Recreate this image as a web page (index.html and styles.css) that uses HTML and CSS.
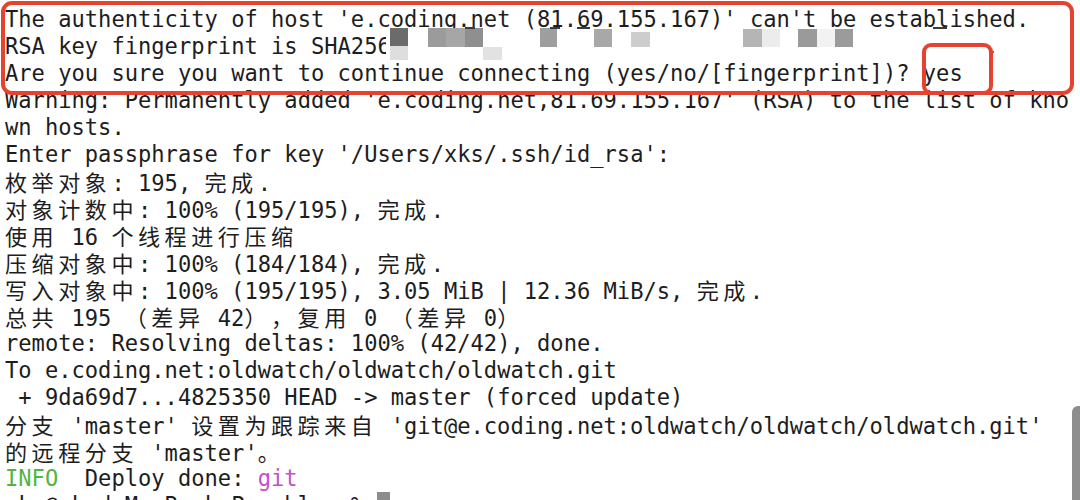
FILE: index.html
```html
<!DOCTYPE html>
<html lang="zh-CN">
<head>
<meta charset="utf-8">
<title>Terminal</title>
<link rel="stylesheet" href="styles.css">
</head>
<body>
<div class="term">
  <div class="line">The authenticity of host 'e.coding.net (81.69.155.167)' can't be established.</div>
  <div class="line">RSA key fingerprint is SHA256</div>
  <div class="line">Are you sure you want to continue connecting (yes/no/[fingerprint])? yes</div>
  <div class="line">Warning: Permanently added 'e.coding.net,81.69.155.167' (RSA) to the list of kno</div>
  <div class="line">wn hosts.</div>
  <div class="line">Enter passphrase for key '/Users/xks/.ssh/id_rsa':</div>
  <div class="line"><span class="cjk">枚举对象</span>: 195, <span class="cjk">完成</span>.</div>
  <div class="line"><span class="cjk">对象计数中</span>: 100% (195/195), <span class="cjk">完成</span>.</div>
  <div class="line"><span class="cjk">使用</span> 16 <span class="cjk">个线程进行压缩</span></div>
  <div class="line"><span class="cjk">压缩对象中</span>: 100% (184/184), <span class="cjk">完成</span>.</div>
  <div class="line"><span class="cjk">写入对象中</span>: 100% (195/195), 3.05 MiB | 12.36 MiB/s, <span class="cjk">完成</span>.</div>
  <div class="line"><span class="cjk">总共</span> 195 <span class="cjk">（差异</span> 42<span class="cjk">），复用</span> 0 <span class="cjk">（差异</span> 0<span class="cjk">）</span></div>
  <div class="line">remote: Resolving deltas: 100% (42/42), done.</div>
  <div class="line">To e.coding.net:oldwatch/oldwatch/oldwatch.git</div>
  <div class="line"> + 9da69d7...4825350 HEAD -> master (forced update)</div>
  <div class="line"><span class="cjk">分支</span> 'master' <span class="cjk">设置为跟踪来自</span> 'git@e.coding.net:oldwatch/oldwatch/oldwatch.git'</div>
  <div class="line"><span class="cjk">的远程分支</span> 'master'<span class="cjk">。</span></div>
  <div class="line"><span class="info">INFO</span>  Deploy done: <span class="mag">git</span></div>
  <div class="line">xks@xksdeMacBook-Pro blog % <span class="cursor"></span></div>

  <div class="redact">
    <div class="mask"></div>
    <div class="m m1"></div><div class="m m2"></div><div class="m m3"></div>
    <div class="m m4"></div><div class="m m5"></div><div class="m m6"></div>
    <div class="m m7"></div><div class="m m8"></div><div class="m m9"></div>
    <div class="m m10"></div><div class="m m11"></div><div class="m m12"></div>
    <div class="m m13"></div><div class="m m14"></div>
    <div class="m dot"></div>
    <div class="m u1"></div><div class="m u2"></div><div class="m u3"></div><div class="m u4"></div>
  </div>

  <div class="box box-big"></div>
  <div class="box box-small"></div>
  <div class="scroll"></div>
</div>
</body>
</html>
```
FILE: styles.css
```css
html, body {
  margin: 0;
  padding: 0;
  background: #ffffff;
}

.term {
  position: relative;
  width: 1080px;
  height: 500px;
  overflow: hidden;
  box-sizing: border-box;
  padding: 6px 0 0 5px;
  font-family: "DejaVu Sans Mono", "Noto Sans CJK SC", monospace;
  font-size: 22.1px;
  color: #1d1d1d;
  text-spacing-trim: space-all;
}

.line {
  height: 27px;
  line-height: 27px;
  white-space: pre;
}

.cjk {
  font-family: "Noto Sans CJK SC", sans-serif;
  letter-spacing: 4.5px;
}

.info {
  color: #52b541;
}

.mag {
  color: #c64fcb;
}

.cursor {
  display: inline-block;
  width: 13px;
  height: 27px;
  vertical-align: top;
  background: #8c8c8c;
}

/* redaction overlay on the fingerprint */
.redact .mask,
.redact .m {
  position: absolute;
}

.mask {
  left: 386px;
  top: 33px;
  width: 612px;
  height: 27px;
  background: #ffffff;
}

.m1 { left: 390px; top: 28px; width: 18px; height: 18px; background: #6b6b6b; }
.m2 { left: 390px; top: 46px; width: 18px; height: 14px; background: #dedede; }
.m3 { left: 428px; top: 28px; width: 18px; height: 19px; background: #9b9b9b; }
.m4 { left: 446px; top: 28px; width: 19px; height: 19px; background: #a6a6a6; }
.m5 { left: 465px; top: 28px; width: 18px; height: 19px; background: #8f8f8f; }
.m6 { left: 483px; top: 47px; width: 19px; height: 13px; background: #e2e2e2; }
.m7 { left: 540px; top: 28px; width: 17px; height: 19px; background: #9e9e9e; }
.m8 { left: 594px; top: 29px; width: 18px; height: 18px; background: #a8a8a8; }
.m9 { left: 631px; top: 32px; width: 19px; height: 15px; background: #cdcdcd; }
.m10 { left: 743px; top: 29px; width: 19px; height: 18px; background: #b5b5b5; }
.m11 { left: 762px; top: 29px; width: 18px; height: 18px; background: #ececec; }
.m12 { left: 798px; top: 29px; width: 19px; height: 18px; background: #9a9a9a; }
.m13 { left: 817px; top: 29px; width: 18px; height: 18px; background: #f2f2f2; }
.m14 { left: 835px; top: 29px; width: 18px; height: 18px; background: #9b9b9b; }
.dot { left: 992px; top: 51px; width: 2px; height: 2px; background: #666666; }
.u1 { left: 465px; top: 27px; width: 10px; height: 2px; background: #3a3a3a; }
.u2 { left: 550px; top: 27px; width: 10px; height: 2px; background: #3a3a3a; }
.u3 { left: 577px; top: 27px; width: 13px; height: 2px; background: #3a3a3a; }
.u4 { left: 933px; top: 27px; width: 14px; height: 2px; background: #3a3a3a; }

/* red highlight boxes drawn over the screenshot */
.box {
  position: absolute;
  box-sizing: border-box;
  border: 4px solid #e5432f;
}

.box-big {
  left: 1px;
  top: 1px;
  width: 1073px;
  height: 94px;
  border-radius: 11px;
}

.box-small {
  left: 922px;
  top: 43px;
  width: 71px;
  height: 52px;
  border-radius: 9px;
}

.scroll {
  position: absolute;
  left: 1072px;
  top: 406px;
  width: 14px;
  height: 110px;
  border-radius: 6px;
  background: #8e8e8e;
}
```
